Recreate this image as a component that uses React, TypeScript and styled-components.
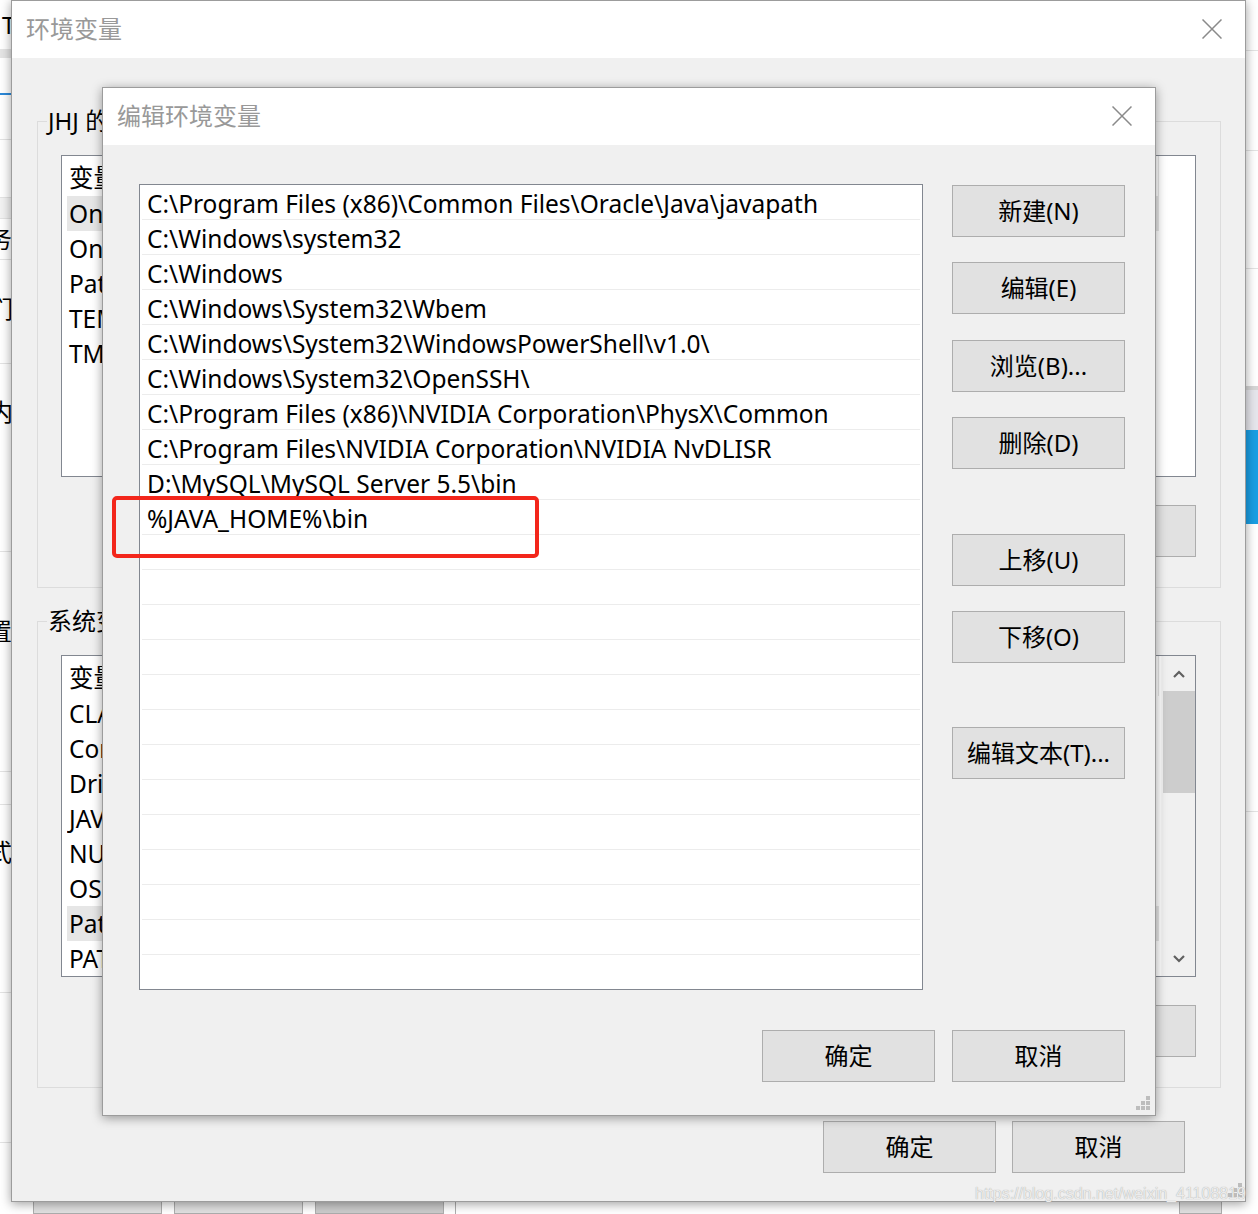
import React from "react";
import styled, { createGlobalStyle } from "styled-components";

const UI_FONT = `"Noto Sans", "Noto Sans CJK SC", sans-serif`;

const GlobalStyle = createGlobalStyle`
  html, body { margin: 0; padding: 0; }
  body {
    width: 1258px;
    height: 1214px;
    overflow: hidden;
    background: #fff;
    font-family: ${UI_FONT};
  }
  * { box-sizing: border-box; }
`;

/* ---------- desktop / behind window ---------- */

const Page = styled.div`
  position: relative;
  width: 1258px;
  height: 1214px;
  overflow: hidden;
  background: #fff;
  display: flex;
  flex-direction: column;
  font-family: ${UI_FONT};
`;

const TopArea = styled.div`
  height: 1202px;
  display: flex;
`;

const Strip = styled.div<{ $w: number }>`
  width: ${(p) => p.$w}px;
  flex: none;
  display: flex;
  flex-direction: column;
  overflow: hidden;
  background: #fff;
`;

const StripFill = styled.div`
  flex: 1;
`;

const Seg = styled.div<{ $h: number; $bg?: string; $line?: boolean }>`
  height: ${(p) => p.$h}px;
  flex: none;
  background: ${(p) => p.$bg ?? "transparent"};
  border-bottom: ${(p) => (p.$line ? "1px solid #e3e3e3" : "none")};
  display: flex;
  align-items: center;
  overflow: hidden;
`;

const Slice = styled.span<{ $shift: number }>`
  flex: none;
  margin-left: ${(p) => p.$shift}px;
  font-size: 24px;
  line-height: 30px;
  color: #000;
  white-space: nowrap;
`;

const Middle = styled.div`
  flex: 1;
`;

const BottomArea = styled.div`
  height: 12px;
  display: flex;
  align-items: flex-start;
  padding-left: 33px;
  gap: 12px;
`;

const BehindButton = styled.div<{ $dark?: boolean; $w: number }>`
  width: ${(p) => p.$w}px;
  height: 12px;
  flex: none;
  background: ${(p) => (p.$dark ? "#cccccc" : "#e1e1e1")};
  border: 1px solid #adadad;
  border-top: none;
`;

const BehindRule = styled.div`
  width: 1px;
  height: 12px;
  background: #adadad;
  margin-left: -1px;
`;

const BottomSpacer = styled.div`
  flex: 1;
`;

const BottomEnd = styled.div`
  width: 24px;
  flex: none;
`;

/* ---------- generic window parts ---------- */

const Window = styled.div<{ $x: number; $y: number; $w: number; $h: number }>`
  position: absolute;
  left: ${(p) => p.$x}px;
  top: ${(p) => p.$y}px;
  width: ${(p) => p.$w}px;
  height: ${(p) => p.$h}px;
  background: #f0f0f0;
  border: 1px solid #9c9c9c;
  box-shadow: 0 2px 10px rgba(0, 0, 0, 0.38);
  display: flex;
  flex-direction: column;
`;

const TitleBar = styled.div<{ $pr: number }>`
  height: 57px;
  flex: none;
  background: #fff;
  display: flex;
  align-items: center;
  justify-content: space-between;
  padding: 0 ${(p) => p.$pr}px 3px 14px;
`;

const TitleText = styled.div`
  font-family: "Noto Sans CJK SC", sans-serif;
  font-size: 24px;
  color: #999999;
  line-height: 30px;
`;

const CloseBox = styled.div`
  width: 20px;
  height: 20px;
  display: flex;
  margin-top: 2px;
`;

const Btn = styled.button<{ $w?: number }>`
  width: ${(p) => p.$w ?? 173}px;
  height: 52px;
  flex: none;
  padding: 0;
  margin: 0;
  background: #e1e1e1;
  border: 1px solid #adadad;
  border-radius: 0;
  font-family: ${UI_FONT};
  font-size: 24px;
  color: #000;
  line-height: 30px;
`;

const GripBox = styled.div<{ $r: number; $b: number }>`
  position: absolute;
  right: ${(p) => p.$r}px;
  bottom: ${(p) => p.$b}px;
  width: 16px;
  height: 16px;
  display: flex;
`;

/* ---------- outer dialog ---------- */

const OuterBody = styled.div`
  flex: 1;
  padding: 0 24px 0 25px;
  display: flex;
  flex-direction: column;
`;

const Group = styled.fieldset<{ $mt: number }>`
  margin: ${(p) => p.$mt}px 0 0;
  padding: 18px 24px 30px 23px;
  border: 1px solid #dcdcdc;
  min-width: 0;
  display: flex;
  flex-direction: column;
`;

const GroupLabel = styled.legend`
  margin-left: -14px;
  padding: 0 1px;
  font-size: 24px;
  line-height: 32px;
  color: #000;
`;

const VarList = styled.div`
  height: 322px;
  background: #fff;
  border: 1px solid #828790;
  display: flex;
  overflow: hidden;
`;

const VarCols = styled.div`
  flex: 1;
  padding: 0 5px;
  display: flex;
  flex-direction: column;
  min-width: 0;
`;

const VarHead = styled.div`
  width: 1092px;
  height: 40px;
  flex: none;
  display: grid;
  grid-template-columns: 300px 1fr;
  align-items: center;
  padding-left: 2px;
  border-right: 1px solid #e5e5e5;
  font-size: 24.5px;
  color: #000;
  white-space: nowrap;
`;

const VarRow = styled.div<{ $sel?: boolean }>`
  width: 1092px;
  height: 35px;
  flex: none;
  display: grid;
  grid-template-columns: 300px 1fr;
  align-items: center;
  padding-left: 2px;
  background: ${(p) => (p.$sel ? "#e6e6e6" : "transparent")};
  font-size: 24.5px;
  color: #000;
  white-space: nowrap;
  overflow: hidden;
`;

const ScrollBar = styled.div`
  width: 34px;
  flex: none;
  background: #f0f0f0;
  border-left: 1px solid #f5f5f5;
  display: flex;
  flex-direction: column;
  align-items: center;
`;

const ScrollArrow = styled.div`
  height: 35px;
  width: 100%;
  flex: none;
  display: flex;
  align-items: center;
  justify-content: center;
`;

const ScrollThumb = styled.div`
  width: 32px;
  height: 102px;
  flex: none;
  background: #cdcdcd;
`;

const ScrollTrack = styled.div`
  flex: 1;
`;

const GroupButtons = styled.div`
  margin-top: 28px;
  display: flex;
  justify-content: flex-end;
  gap: 16px;
`;

const OuterFooter = styled.div`
  margin-top: 33px;
  padding-right: 36px;
  display: flex;
  justify-content: flex-end;
  gap: 16px;
`;

/* ---------- inner dialog ---------- */

const InnerBody = styled.div`
  flex: 1;
  padding: 39px 30px 0 36px;
  display: flex;
  flex-direction: column;
`;

const InnerMain = styled.div`
  display: flex;
  gap: 29px;
`;

const PathList = styled.div`
  width: 784px;
  height: 806px;
  flex: none;
  background: #fff;
  border: 1px solid #828790;
  display: flex;
  flex-direction: column;
  overflow: hidden;
`;

const PathRow = styled.div`
  height: 35px;
  flex: none;
  margin: 0 2px;
  padding: 2px 0 0 5px;
  border-bottom: 1px solid #ececec;
  display: flex;
  align-items: center;
  font-size: 24.5px;
  color: #000;
  white-space: nowrap;
`;

const SideButtons = styled.div`
  padding-top: 1px;
  display: flex;
  flex-direction: column;
`;

const SideGap = styled.div<{ $h: number }>`
  height: ${(p) => p.$h}px;
  flex: none;
`;

const InnerFooter = styled.div`
  margin-top: 40px;
  display: flex;
  justify-content: flex-end;
  gap: 17px;
`;

/* ---------- overlays ---------- */

const RedMark = styled.div`
  position: absolute;
  left: 112px;
  top: 496px;
  width: 427px;
  height: 62px;
  border: 4px solid #f3261b;
  border-radius: 5px;
`;

const Watermark = styled.div`
  position: absolute;
  right: 12px;
  top: 1185px;
  font-family: "Liberation Sans", Arial, sans-serif;
  font-size: 16px;
  color: #ececec;
  text-shadow: 0 0 1px #9a9a9a;
  white-space: nowrap;
`;

/* ---------- icons ---------- */

const XIcon = () => (
  <svg width="20" height="20" viewBox="0 0 20 20">
    <path d="M0.5 0.5 L19.5 19.5 M19.5 0.5 L0.5 19.5" stroke="#8a8a8a" strokeWidth="1.5" fill="none" />
  </svg>
);

const Chevron = ({ up }: { up?: boolean }) => (
  <svg width="12" height="8" viewBox="0 0 12 8">
    <path
      d={up ? "M1 7 L6 2 L11 7" : "M1 1 L6 6 L11 1"}
      stroke="#606060"
      strokeWidth="2.2"
      fill="none"
    />
  </svg>
);

const Grip = () => (
  <svg width="16" height="16" viewBox="0 0 16 16">
    {[
      [11, 1],
      [6, 6],
      [11, 6],
      [1, 11],
      [6, 11],
      [11, 11],
    ].map(([x, y]) => (
      <rect key={`${x}-${y}`} x={x} y={y} width="4" height="4" fill="#bdbdbd" />
    ))}
  </svg>
);

/* ---------- data ---------- */

const userVars: [string, string][] = [
  ["OneDrive", "C:\\Users\\JHJ\\OneDrive"],
  ["OneDriveConsumer", "C:\\Users\\JHJ\\OneDrive"],
  ["Path", "C:\\Users\\JHJ\\AppData\\Local\\Microsoft\\WindowsApps;"],
  ["TEMP", "C:\\Users\\JHJ\\AppData\\Local\\Temp"],
  ["TMP", "C:\\Users\\JHJ\\AppData\\Local\\Temp"],
];

const sysVars: [string, string][] = [
  ["CLASSPATH", ".;%JAVA_HOME%\\lib;%JAVA_HOME%\\lib\\tools.jar"],
  ["ComSpec", "C:\\Windows\\system32\\cmd.exe"],
  ["DriverData", "C:\\Windows\\System32\\Drivers\\DriverData"],
  ["JAVA_HOME", "C:\\Program Files\\Java\\jdk1.8.0_251"],
  ["NUMBER_OF_PROCESSORS", "8"],
  ["OS", "Windows_NT"],
  ["Path", "C:\\Program Files (x86)\\Common Files\\Oracle\\Java\\javapath;"],
  ["PATHEXT", ".COM;.EXE;.BAT;.CMD;.VBS;.VBE;.JS;.JSE;.WSF;.WSH;.MSC"],
];

const paths = [
  "C:\\Program Files (x86)\\Common Files\\Oracle\\Java\\javapath",
  "C:\\Windows\\system32",
  "C:\\Windows",
  "C:\\Windows\\System32\\Wbem",
  "C:\\Windows\\System32\\WindowsPowerShell\\v1.0\\",
  "C:\\Windows\\System32\\OpenSSH\\",
  "C:\\Program Files (x86)\\NVIDIA Corporation\\PhysX\\Common",
  "C:\\Program Files\\NVIDIA Corporation\\NVIDIA NvDLISR",
  "D:\\MySQL\\MySQL Server 5.5\\bin",
  "%JAVA_HOME%\\bin",
];

const pathRows = [...paths, ...Array(23 - paths.length).fill("")];

/* ---------- app ---------- */

export default function App() {
  return (
    <>
      <GlobalStyle />
      <Page>
        <TopArea>
          <Strip $w={12}>
            <Seg $h={49}>
              <Slice $shift={2}>T</Slice>
            </Seg>
            <Seg $h={9} $bg="#e4e4e4" />
            <Seg $h={35} />
            <Seg $h={2} $bg="#2b88d8" />
            <Seg $h={45} $line />
            <Seg $h={58} $line />
            <Seg $h={21} $bg="#f2f2f2" $line />
            <Seg $h={41} $line>
              <Slice $shift={-12}>务</Slice>
            </Seg>
            <Seg $h={98}>
              <Slice $shift={-11}>们</Slice>
            </Seg>
            <Seg $h={6} $line />
            <Seg $h={95}>
              <Slice $shift={-11}>内</Slice>
            </Seg>
            <Seg $h={93} $line />
            <Seg $h={157}>
              <Slice $shift={-12}>置</Slice>
            </Seg>
            <Seg $h={63} $line />
            <Seg $h={33} $line />
            <Seg $h={94}>
              <Slice $shift={-12}>式</Slice>
            </Seg>
            <Seg $h={94} $line />
            <Seg $h={150} $line />
            <StripFill />
          </Strip>
          <Middle />
          <Strip $w={12}>
            <Seg $h={51} $line />
            <Seg $h={100} $line />
            <Seg $h={118} $line />
            <Seg $h={117} />
            <Seg $h={4} $bg="#d6d6d6" />
            <Seg $h={40} $bg="#e6e6ec" />
            <Seg $h={94} $bg="#1a9ee3" />
            <Seg $h={288} $line />
            <StripFill />
          </Strip>
        </TopArea>
        <BottomArea>
          <BehindButton $w={129} />
          <BehindButton $w={129} />
          <BehindButton $w={129} $dark />
          <BehindRule />
          <BottomSpacer />
          <BehindButton $w={43} />
          <BottomEnd />
        </BottomArea>

        {/* 环境变量 */}
        <Window $x={11} $y={0} $w={1235} $h={1202}>
          <TitleBar $pr={23}>
            <TitleText>环境变量</TitleText>
            <CloseBox>
              <XIcon />
            </CloseBox>
          </TitleBar>
          <OuterBody>
            <Group $mt={47}>
              <GroupLabel>JHJ 的用户变量(U)</GroupLabel>
              <VarList>
                <VarCols>
                  <VarHead>
                    <span>变量</span>
                    <span>值</span>
                  </VarHead>
                  {userVars.map(([k, v], i) => (
                    <VarRow key={k + i} $sel={i === 0}>
                      <span>{k}</span>
                      <span>{v}</span>
                    </VarRow>
                  ))}
                </VarCols>
              </VarList>
              <GroupButtons>
                <Btn>新建(N)...</Btn>
                <Btn>编辑(E)...</Btn>
                <Btn>删除(D)</Btn>
              </GroupButtons>
            </Group>
            <Group $mt={17}>
              <GroupLabel>系统变量(S)</GroupLabel>
              <VarList>
                <VarCols>
                  <VarHead>
                    <span>变量</span>
                    <span>值</span>
                  </VarHead>
                  {sysVars.map(([k, v], i) => (
                    <VarRow key={k + i} $sel={i === 6}>
                      <span>{k}</span>
                      <span>{v}</span>
                    </VarRow>
                  ))}
                </VarCols>
                <ScrollBar>
                  <ScrollArrow>
                    <Chevron up />
                  </ScrollArrow>
                  <ScrollThumb />
                  <ScrollTrack />
                  <ScrollArrow>
                    <Chevron />
                  </ScrollArrow>
                </ScrollBar>
              </VarList>
              <GroupButtons>
                <Btn>新建(W)...</Btn>
                <Btn>编辑(I)...</Btn>
                <Btn>删除(L)</Btn>
              </GroupButtons>
            </Group>
            <OuterFooter>
              <Btn>确定</Btn>
              <Btn>取消</Btn>
            </OuterFooter>
          </OuterBody>
          <GripBox $r={2} $b={3}>
            <Grip />
          </GripBox>
        </Window>

        {/* 编辑环境变量 */}
        <Window $x={102} $y={87} $w={1054} $h={1029}>
          <TitleBar $pr={23}>
            <TitleText>编辑环境变量</TitleText>
            <CloseBox>
              <XIcon />
            </CloseBox>
          </TitleBar>
          <InnerBody>
            <InnerMain>
              <PathList>
                {pathRows.map((p, i) => (
                  <PathRow key={i}>{p}</PathRow>
                ))}
              </PathList>
              <SideButtons>
                <Btn>新建(N)</Btn>
                <SideGap $h={25} />
                <Btn>编辑(E)</Btn>
                <SideGap $h={26} />
                <Btn>浏览(B)...</Btn>
                <SideGap $h={25} />
                <Btn>删除(D)</Btn>
                <SideGap $h={65} />
                <Btn>上移(U)</Btn>
                <SideGap $h={25} />
                <Btn>下移(O)</Btn>
                <SideGap $h={64} />
                <Btn>编辑文本(T)...</Btn>
              </SideButtons>
            </InnerMain>
            <InnerFooter>
              <Btn>确定</Btn>
              <Btn>取消</Btn>
            </InnerFooter>
          </InnerBody>
          <GripBox $r={4} $b={4}>
            <Grip />
          </GripBox>
        </Window>

        <RedMark />
        <Watermark>https://blog.csdn.net/weixin_41108819</Watermark>
      </Page>
    </>
  );
}
